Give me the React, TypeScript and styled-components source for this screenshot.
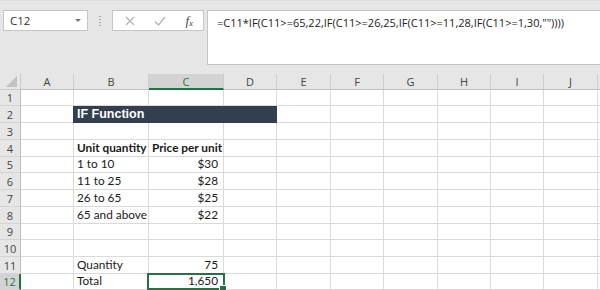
import React from 'react'
import styled, { createGlobalStyle, css } from 'styled-components'

const GlobalStyle = createGlobalStyle`
  html, body {
    margin: 0;
    padding: 0;
    background: #e6e6e6;
  }
  * {
    box-sizing: border-box;
  }
`

const COLS = ['A', 'B', 'C', 'D', 'E', 'F', 'G', 'H', 'I', 'J', '']
const COL_WIDTHS = [21, 53, 75, 75, 53, 54, 53, 54, 53, 53, 54, 20]
const ROW_HEIGHTS = [16, 17, 17, 17, 16, 17, 17, 17, 16, 17, 17, 16]
const FORMULA = '=C11*IF(C11>=65,22,IF(C11>=26,25,IF(C11>=11,28,IF(C11>=1,30,""))))'

type CellData = { text: string; bold?: boolean; right?: boolean; dark?: boolean }

const cells: Record<string, CellData> = {
  B2: { text: 'IF Function', bold: true, dark: true },
  C2: { text: '', dark: true },
  D2: { text: '', dark: true },
  B4: { text: 'Unit quantity', bold: true },
  C4: { text: 'Price per unit', bold: true },
  B5: { text: '1 to 10' },
  C5: { text: '$30', right: true },
  B6: { text: '11 to 25' },
  C6: { text: '$28', right: true },
  B7: { text: '26 to 65' },
  C7: { text: '$25', right: true },
  B8: { text: '65 and above' },
  C8: { text: '$22', right: true },
  B11: { text: 'Quantity' },
  C11: { text: '75', right: true },
  B12: { text: 'Total' },
  C12: { text: '1,650', right: true },
}

const selectedCol = 'C'
const selectedRow = 12

const App: React.FC = () => {
  return (
    <Wrapper>
      <GlobalStyle />
      <FormulaArea>
        <NameBox>
          <span>C12</span>
          <DropArrow />
        </NameBox>
        <Grip />
        <FxButtons>
          <svg width="10" height="10" viewBox="0 0 10 10">
            <path d="M1 1 L9 9 M9 1 L1 9" stroke="#b3b3b3" strokeWidth="1.2" fill="none" />
          </svg>
          <svg width="12" height="10" viewBox="0 0 12 10">
            <path d="M1 5.5 L4.5 9 L11 1" stroke="#b3b3b3" strokeWidth="1.3" fill="none" />
          </svg>
          <Fx>
            <i>f</i>
            <sub>x</sub>
          </Fx>
        </FxButtons>
        <FormulaBar>{FORMULA}</FormulaBar>
      </FormulaArea>
      <Sheet>
        <Corner>
          <svg width="11" height="11" viewBox="0 0 11 11">
            <polygon points="11,0 11,11 0,11" fill="#c1c1c1" />
          </svg>
        </Corner>
        {COLS.map((c) => (
          <ColHeader key={c || 'K'} $selected={c === selectedCol}>
            {c}
          </ColHeader>
        ))}
        {ROW_HEIGHTS.map((_, i) => {
          const row = i + 1
          return (
            <React.Fragment key={row}>
              <RowHeader $selected={row === selectedRow}>{row}</RowHeader>
              {COLS.map((c) => {
                const data = cells[`${c}${row}`]
                return (
                  <Cell
                    key={`${c}${row}`}
                    $bold={data?.bold}
                    $right={data?.right}
                    $dark={data?.dark}
                    $active={c === selectedCol && row === selectedRow}
                  >
                    {data?.text}
                  </Cell>
                )
              })}
            </React.Fragment>
          )
        })}
      </Sheet>
    </Wrapper>
  )
}

const Wrapper = styled.div`
  width: 600px;
  height: 290px;
  overflow: hidden;
  display: flex;
  flex-direction: column;
  background: #e6e6e6;
`

const FormulaArea = styled.div`
  display: flex;
  align-items: flex-start;
  height: 74px;
  flex: none;
  padding: 10px 0 0 3px;
  border-top: 1px solid #dcdcdc;
`

const NameBox = styled.div`
  display: flex;
  align-items: center;
  justify-content: space-between;
  width: 85px;
  height: 21px;
  margin-top: -1px;
  padding: 0 6px 0 6px;
  background: #ffffff;
  border: 1px solid #c6c6c6;
  font-family: 'Open Sans', sans-serif;
  font-size: 11.5px;
  color: #333333;
`

const DropArrow = styled.span`
  width: 0;
  height: 0;
  border-left: 3px solid transparent;
  border-right: 3px solid transparent;
  border-top: 3px solid #777777;
`

const Grip = styled.div`
  width: 2px;
  height: 10px;
  margin: 5px 11px 0 11px;
  background: repeating-linear-gradient(to bottom, #a8a8a8 0 1px, transparent 1px 3px);
`

const FxButtons = styled.div`
  display: flex;
  align-items: center;
  justify-content: space-between;
  width: 92px;
  height: 21px;
  margin-top: -1px;
  padding: 0 10px 0 12px;
  background: #ffffff;
  border: 1px solid #c6c6c6;
`

const Fx = styled.span`
  font-family: 'Liberation Serif', serif;
  font-size: 13px;
  color: #444444;
  line-height: 1;

  i {
    font-style: italic;
  }

  sub {
    font-style: italic;
    font-size: 9px;
    vertical-align: -1px;
  }
`

const FormulaBar = styled.div`
  flex: 1;
  height: 55px;
  margin-left: 3px;
  margin-top: -1px;
  margin-right: -2px;
  padding: 4px 0 0 9px;
  background: #ffffff;
  border: 1px solid #c6c6c6;
  font-family: 'Open Sans', sans-serif;
  font-size: 11px;
  line-height: 16px;
  color: #222222;
  white-space: nowrap;
`

const Sheet = styled.div`
  display: grid;
  grid-template-columns: ${COL_WIDTHS.map((w) => `${w}px`).join(' ')};
  grid-template-rows: 16px ${ROW_HEIGHTS.map((h) => `${h}px`).join(' ')};
  background: #ffffff;
  font-family: Lato, sans-serif;
`

const headerBase = css`
  display: flex;
  align-items: center;
  justify-content: center;
  background: #e6e6e6;
  font-family: 'Open Sans', sans-serif;
  font-size: 11px;
  color: #444444;
`

const Corner = styled.div`
  ${headerBase};
  align-items: flex-end;
  justify-content: flex-end;
  padding: 0 3px 2px 0;
  border-right: 1px solid #c9c9c9;
  border-bottom: 1px solid #c9c9c9;
`

const ColHeader = styled.div<{ $selected?: boolean }>`
  ${headerBase};
  border-right: 1px solid #cdcdcd;
  border-bottom: 1px solid #bfbfbf;
  ${({ $selected }) =>
    $selected &&
    css`
      background: #d3d3d3;
      color: #217346;
      border-bottom: 2px solid #217346;
    `}
`

const RowHeader = styled.div<{ $selected?: boolean }>`
  ${headerBase};
  border-right: 1px solid #bfbfbf;
  border-bottom: 1px solid #d4d4d4;
  ${({ $selected }) =>
    $selected &&
    css`
      background: #d3d3d3;
      color: #217346;
      border-right: 2px solid #217346;
    `}
`

const Cell = styled.div<{ $bold?: boolean; $right?: boolean; $dark?: boolean; $active?: boolean }>`
  position: relative;
  display: flex;
  align-items: flex-end;
  justify-content: ${({ $right }) => ($right ? 'flex-end' : 'flex-start')};
  padding: 0 5px 1px 3px;
  border-right: 1px solid #dadada;
  border-bottom: 1px solid #dadada;
  font-size: 11.8px;
  line-height: 15px;
  font-weight: ${({ $bold }) => ($bold ? 700 : 400)};
  color: #1a1a1a;
  white-space: nowrap;

  ${({ $dark }) =>
    $dark &&
    css`
      background: #333f4f;
      color: #ffffff;
      font-family: 'Liberation Sans', Arial, sans-serif;
      font-size: 12.5px;
      padding-bottom: 0;
      border-right-color: #333f4f;
      border-bottom-color: #333f4f;
      box-shadow: -1px 0 0 #333f4f;
    `}

  ${({ $active }) =>
    $active &&
    css`
      &::after {
        content: '';
        position: absolute;
        top: -1px;
        left: -2px;
        right: -2px;
        bottom: -1px;
        border: 2px solid #217346;
      }
      &::before {
        content: '';
        position: absolute;
        right: -4px;
        bottom: -4px;
        width: 6px;
        height: 6px;
        background: #217346;
        border: 1px solid #ffffff;
        z-index: 1;
      }
    `}
`

export default App
